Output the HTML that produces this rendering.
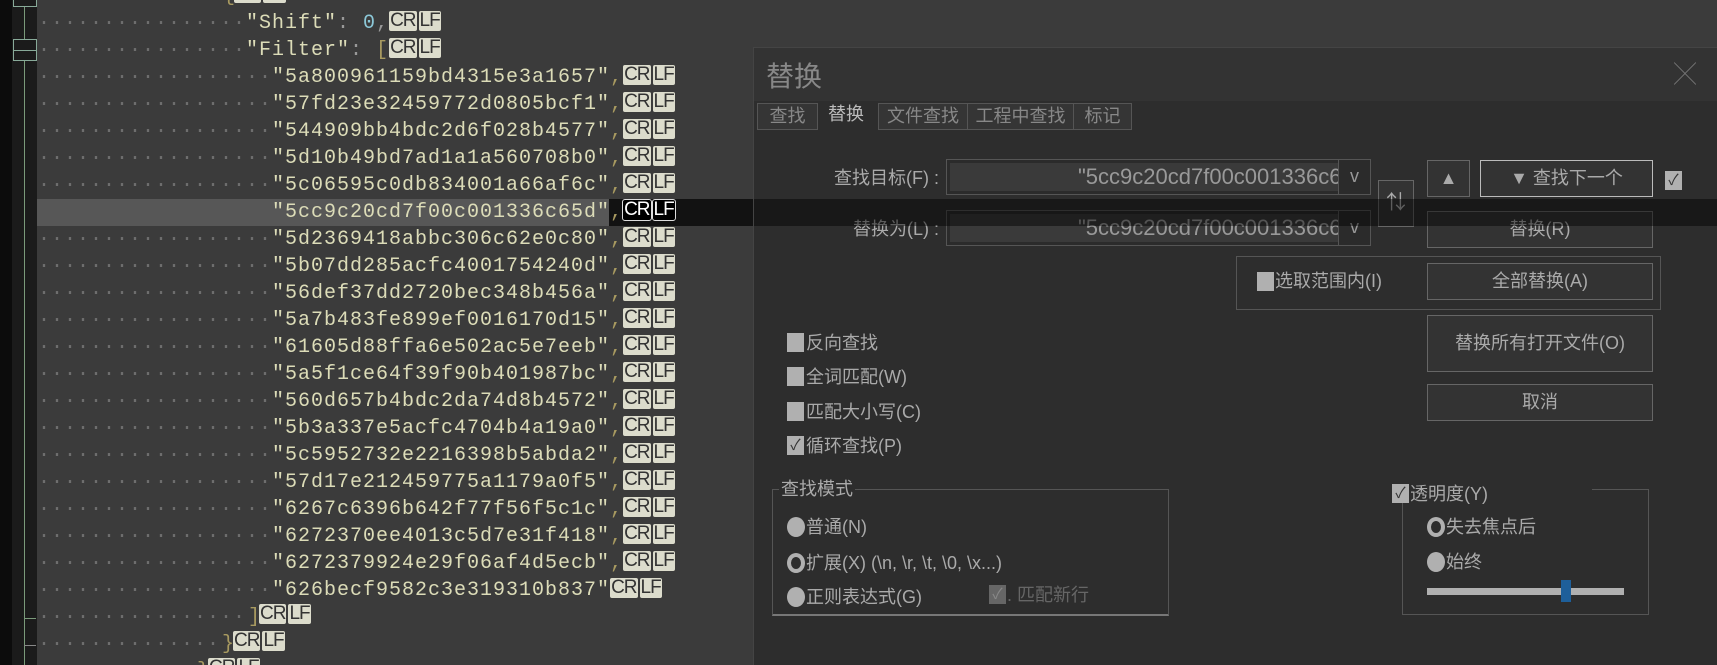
<!DOCTYPE html>
<html><head><meta charset="utf-8"><style>
*{margin:0;padding:0;box-sizing:border-box}
html,body{width:1717px;height:665px;overflow:hidden}
body{background:#3b3b3b;font-family:"Liberation Sans","Noto Sans CJK SC",sans-serif}
#root{position:relative;width:1717px;height:665px;overflow:hidden}
.a{position:absolute}
.gut{left:0;top:0;width:37px;height:665px;background:#0c0c0c}
.gut2{left:12px;top:0;width:25px;height:665px;background:#1b1b1b}
.ln{position:absolute;left:0;height:27px;width:720px;font-family:"Liberation Mono",monospace;font-size:20px;line-height:27px;white-space:pre;color:#dcdcb8;letter-spacing:1px}
.dots{position:absolute;top:0;left:38px;color:#6e6e6e}
.crlf{display:inline-block;vertical-align:middle;margin-top:-3px;letter-spacing:-1px}
.crlf span{display:inline-block;background:#dcdccc;color:#333;font-family:"Liberation Sans",sans-serif;font-size:19px;line-height:20px;height:20px;padding:0 1px;border-radius:2px;margin-right:2px}
.hl .crlf span{background:#000;color:#fff;outline:1px solid #ddd}
.br{color:#a89a60}
.dlg{left:753px;top:47px;width:964px;height:618px;background:#2d2d2d;border-top:1px solid #444;border-left:1px solid #444;color:#aaa;font-size:18px}
.btn{position:absolute;border:1px solid #666;background:#333;color:#aaa;text-align:center;font-size:18px}
.cb{position:absolute;width:17px;height:19px;background:#b0b0b0;color:#333;font-size:15px;line-height:19px;text-align:center}
.lbl{position:absolute;white-space:nowrap;line-height:22px}
.rad{position:absolute;width:18px;height:20px;border-radius:50%;background:#b0b0b0}
.rad.s{background:#2d2d2d;border:4px solid #b0b0b0}
.tab{position:absolute;top:55px;height:27px;border:1px solid #555;background:#353535;color:#888;font-size:18px;line-height:25px;text-align:center}
.inp{position:absolute;left:192px;width:425px;height:36px;border:1px solid #555;background:#2b2b2b}
.inp .f{position:absolute;left:3px;top:3px;width:389px;height:28px;background:#3a3a3a;overflow:hidden;color:#999;font-size:22px;line-height:28px;white-space:nowrap}
.inp .f span{position:absolute;left:128px}
.inp .d{position:absolute;right:0;top:0;width:32px;height:34px;border-left:1px solid #555;color:#999;text-align:center;line-height:32px;font-size:18px}
</style></head><body><div id="root">
<div class="a gut"></div><div class="a gut2"></div>
<div class="a" style="left:24px;top:0;width:1px;height:665px;background:#7a9a7a"></div>
<div class="a" style="left:13px;top:-1px;width:24px;height:8px;border:1px solid #8a9;background:#1b1b1b"></div>
<div class="a" style="left:13px;top:39px;width:24px;height:22px;border:1px solid #8a9;background:#1b1b1b"></div>
<div class="a" style="left:14px;top:50px;width:22px;height:1px;background:#8a9"></div>
<div class="a" style="left:24px;top:618px;width:12px;height:1px;background:#7a9a7a"></div>
<div class="a" style="left:24px;top:645px;width:12px;height:1px;background:#888"></div>
<div class="a" style="left:37px;top:199px;width:572px;height:27px;background:#575757"></div>
<div class="a" style="left:609px;top:199px;width:1108px;height:27px;background:#121212"></div>

<div class="ln" style="top:-17px"><span class="br" style="position:absolute;left:223px">{</span><span style="position:absolute;left:234px" class="crlf"><span>CR</span><span>LF</span></span></div>
<div class="ln" style="top:10px"><span class="dots">················</span><span style="position:absolute;left:246px">"Shift"<span style="color:#999">:</span> <span style="color:#8cc8d8">0</span><span style="color:#999">,</span><span class="crlf"><span>CR</span><span>LF</span></span></span></div>
<div class="ln" style="top:37px"><span class="dots">················</span><span style="position:absolute;left:246px">"Filter"<span style="color:#999">:</span> <span class="br">[</span><span class="crlf"><span>CR</span><span>LF</span></span></span></div>
<div class="ln" style="top:604px"><span class="dots">················</span><span class="br" style="position:absolute;left:248px">]</span><span style="position:absolute;left:259px" class="crlf"><span>CR</span><span>LF</span></span></div>
<div class="ln" style="top:631px"><span class="dots">··············</span><span class="br" style="position:absolute;left:222px">}</span><span style="position:absolute;left:233px" class="crlf"><span>CR</span><span>LF</span></span></div>
<div class="ln" style="top:658px"><span class="br" style="position:absolute;left:197px">}</span><span style="position:absolute;left:208px" class="crlf"><span>CR</span><span>LF</span></span></div>

<div class="ln" style="top:64px"><span class="dots">··················</span><span style="position:absolute;left:272px">"5a800961159bd4315e3a1657"<span class="br">,</span><span class="crlf"><span>CR</span><span>LF</span></span></span></div>
<div class="ln" style="top:91px"><span class="dots">··················</span><span style="position:absolute;left:272px">"57fd23e32459772d0805bcf1"<span class="br">,</span><span class="crlf"><span>CR</span><span>LF</span></span></span></div>
<div class="ln" style="top:118px"><span class="dots">··················</span><span style="position:absolute;left:272px">"544909bb4bdc2d6f028b4577"<span class="br">,</span><span class="crlf"><span>CR</span><span>LF</span></span></span></div>
<div class="ln" style="top:145px"><span class="dots">··················</span><span style="position:absolute;left:272px">"5d10b49bd7ad1a1a560708b0"<span class="br">,</span><span class="crlf"><span>CR</span><span>LF</span></span></span></div>
<div class="ln" style="top:172px"><span class="dots">··················</span><span style="position:absolute;left:272px">"5c06595c0db834001a66af6c"<span class="br">,</span><span class="crlf"><span>CR</span><span>LF</span></span></span></div>
<div class="ln hl" style="top:199px"><span style="position:absolute;left:272px">"5cc9c20cd7f00c001336c65d"<span class="br">,</span><span class="crlf"><span>CR</span><span>LF</span></span></span></div>
<div class="ln" style="top:226px"><span class="dots">··················</span><span style="position:absolute;left:272px">"5d2369418abbc306c62e0c80"<span class="br">,</span><span class="crlf"><span>CR</span><span>LF</span></span></span></div>
<div class="ln" style="top:253px"><span class="dots">··················</span><span style="position:absolute;left:272px">"5b07dd285acfc4001754240d"<span class="br">,</span><span class="crlf"><span>CR</span><span>LF</span></span></span></div>
<div class="ln" style="top:280px"><span class="dots">··················</span><span style="position:absolute;left:272px">"56def37dd2720bec348b456a"<span class="br">,</span><span class="crlf"><span>CR</span><span>LF</span></span></span></div>
<div class="ln" style="top:307px"><span class="dots">··················</span><span style="position:absolute;left:272px">"5a7b483fe899ef0016170d15"<span class="br">,</span><span class="crlf"><span>CR</span><span>LF</span></span></span></div>
<div class="ln" style="top:334px"><span class="dots">··················</span><span style="position:absolute;left:272px">"61605d88ffa6e502ac5e7eeb"<span class="br">,</span><span class="crlf"><span>CR</span><span>LF</span></span></span></div>
<div class="ln" style="top:361px"><span class="dots">··················</span><span style="position:absolute;left:272px">"5a5f1ce64f39f90b401987bc"<span class="br">,</span><span class="crlf"><span>CR</span><span>LF</span></span></span></div>
<div class="ln" style="top:388px"><span class="dots">··················</span><span style="position:absolute;left:272px">"560d657b4bdc2da74d8b4572"<span class="br">,</span><span class="crlf"><span>CR</span><span>LF</span></span></span></div>
<div class="ln" style="top:415px"><span class="dots">··················</span><span style="position:absolute;left:272px">"5b3a337e5acfc4704b4a19a0"<span class="br">,</span><span class="crlf"><span>CR</span><span>LF</span></span></span></div>
<div class="ln" style="top:442px"><span class="dots">··················</span><span style="position:absolute;left:272px">"5c5952732e2216398b5abda2"<span class="br">,</span><span class="crlf"><span>CR</span><span>LF</span></span></span></div>
<div class="ln" style="top:469px"><span class="dots">··················</span><span style="position:absolute;left:272px">"57d17e212459775a1179a0f5"<span class="br">,</span><span class="crlf"><span>CR</span><span>LF</span></span></span></div>
<div class="ln" style="top:496px"><span class="dots">··················</span><span style="position:absolute;left:272px">"6267c6396b642f77f56f5c1c"<span class="br">,</span><span class="crlf"><span>CR</span><span>LF</span></span></span></div>
<div class="ln" style="top:523px"><span class="dots">··················</span><span style="position:absolute;left:272px">"6272370ee4013c5d7e31f418"<span class="br">,</span><span class="crlf"><span>CR</span><span>LF</span></span></span></div>
<div class="ln" style="top:550px"><span class="dots">··················</span><span style="position:absolute;left:272px">"6272379924e29f06af4d5ecb"<span class="br">,</span><span class="crlf"><span>CR</span><span>LF</span></span></span></div>
<div class="ln" style="top:577px"><span class="dots">··················</span><span style="position:absolute;left:272px">"626becf9582c3e319310b837"<span class="crlf"><span>CR</span><span>LF</span></span></span></div>

<div class="a dlg">
 <div class="a" style="left:0;top:0;width:964px;height:53px;background:#333"></div>
 <div class="lbl" style="left:12px;top:12px;font-size:28px;line-height:34px;color:#888">替换</div>
 <div class="lbl" style="left:920px;top:16px;font-size:22px;color:#777">╳</div>
 <div class="tab" style="left:3px;width:61px">查找</div>
 <div class="lbl" style="left:74px;top:55px;color:#bbb">替换</div>
 <div class="tab" style="left:124px;width:90px">文件查找</div>
 <div class="tab" style="left:213px;width:107px">工程中查找</div>
 <div class="tab" style="left:319px;width:59px">标记</div>

 <div class="lbl" style="left:66px;top:119px;width:119px;text-align:right">查找目标(F) :</div>
 <div class="inp" style="top:111px"><div class="f"><span>"5cc9c20cd7f00c001336c65d"</span></div><div class="d">v</div></div>
 <div class="lbl" style="left:66px;top:170px;width:119px;text-align:right">替换为(L) :</div>
 <div class="inp" style="top:162px"><div class="f"><span>"5cc9c20cd7f00c001336c65d"</span></div><div class="d">v</div></div>
 <div class="btn" style="left:624px;top:132px;width:36px;height:47px;line-height:45px;font-size:20px">⇅</div>
 <div class="btn" style="left:673px;top:112px;width:43px;height:37px;line-height:35px">▲</div>
 <div class="btn" style="left:726px;top:112px;width:173px;height:37px;line-height:35px;border-color:#bbb">▼ 查找下一个</div>
 <div class="cb" style="left:911px;top:123px">✓</div>
 <div class="btn" style="left:673px;top:163px;width:226px;height:37px;line-height:35px">替换(R)</div>
 <div class="a" style="left:482px;top:208px;width:425px;height:54px;border:1px solid #555"></div>
 <div class="cb" style="left:503px;top:224px"></div>
 <div class="lbl" style="left:521px;top:222px">选取范围内(I)</div>
 <div class="btn" style="left:673px;top:215px;width:226px;height:37px;line-height:35px">全部替换(A)</div>
 <div class="btn" style="left:673px;top:267px;width:226px;height:57px;line-height:55px">替换所有打开文件(O)</div>
 <div class="btn" style="left:673px;top:336px;width:226px;height:37px;line-height:35px">取消</div>

 <div class="cb" style="left:33px;top:285px"></div><div class="lbl" style="left:52px;top:284px">反向查找</div>
 <div class="cb" style="left:33px;top:319px"></div><div class="lbl" style="left:52px;top:318px">全词匹配(W)</div>
 <div class="cb" style="left:33px;top:354px"></div><div class="lbl" style="left:52px;top:353px">匹配大小写(C)</div>
 <div class="cb" style="left:33px;top:388px">✓</div><div class="lbl" style="left:52px;top:387px">循环查找(P)</div>

 <div class="a" style="left:18px;top:441px;width:397px;height:127px;border:1px solid #555;border-bottom:2px solid #777"></div>
 <div class="lbl" style="left:25px;top:430px;background:#2d2d2d;padding:0 2px">查找模式</div>
 <div class="rad" style="left:33px;top:469px"></div><div class="lbl" style="left:52px;top:468px">普通(N)</div>
 <div class="rad s" style="left:33px;top:505px"></div><div class="lbl" style="left:52px;top:504px">扩展(X) (\n, \r, \t, \0, \x...)</div>
 <div class="rad" style="left:33px;top:539px"></div><div class="lbl" style="left:52px;top:538px">正则表达式(G)</div>
 <div class="cb" style="left:235px;top:537px;background:#666;color:#888">✓</div><div class="lbl" style="left:253px;top:536px;color:#666">. 匹配新行</div>

 <div class="a" style="left:648px;top:441px;width:247px;height:126px;border:1px solid #555;border-top:none"></div>
 <div class="a" style="left:838px;top:441px;width:57px;height:1px;background:#555"></div>
 <div class="cb" style="left:638px;top:436px">✓</div><div class="lbl" style="left:656px;top:435px">透明度(Y)</div>
 <div class="rad s" style="left:673px;top:469px"></div><div class="lbl" style="left:692px;top:468px">失去焦点后</div>
 <div class="rad" style="left:673px;top:504px"></div><div class="lbl" style="left:692px;top:503px">始终</div>
 <div class="a" style="left:673px;top:540px;width:197px;height:7px;background:#b0b0b0"></div>
 <div class="a" style="left:807px;top:532px;width:10px;height:22px;background:#1e5f9a"></div>
</div>
<div class="a" style="left:754px;top:199px;width:963px;height:27px;background:rgba(0,0,0,0.45)"></div>
</div></body></html>
